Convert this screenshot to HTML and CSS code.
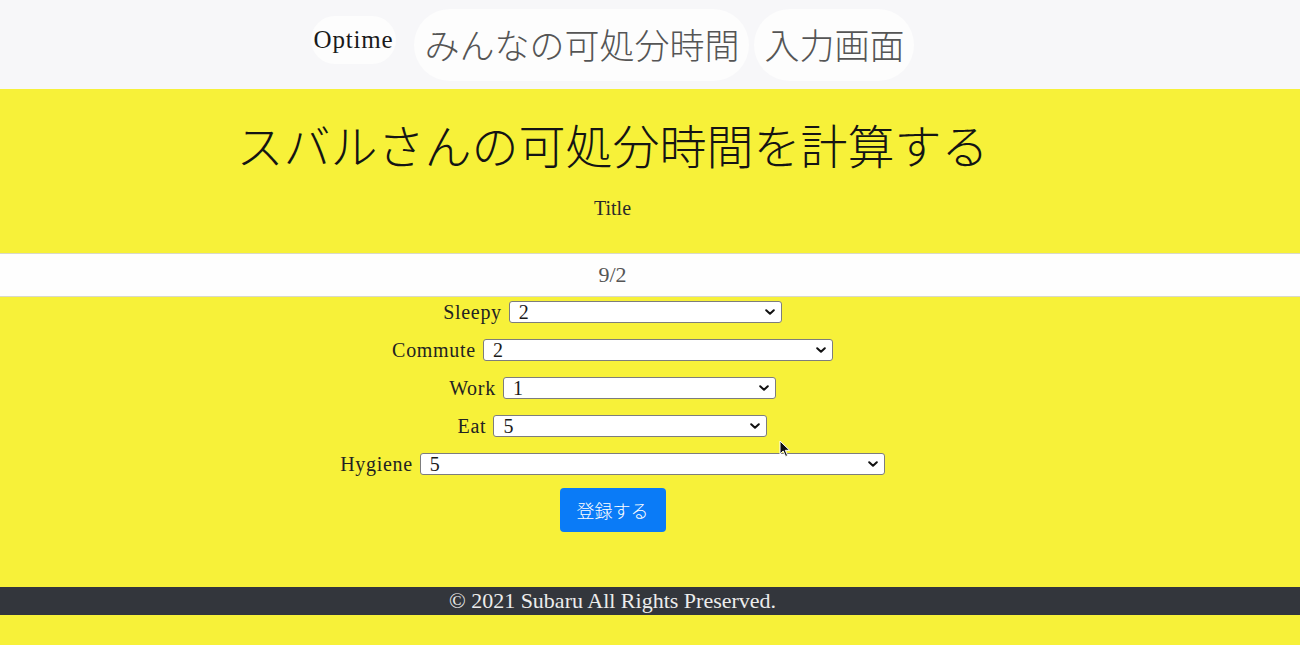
FILE: index.html
```html
<!DOCTYPE html>
<html lang="ja">
<head>
<meta charset="utf-8">
<title>Optime</title>
<link rel="stylesheet" href="styles.css">
</head>
<body>
<nav class="topnav">
  <a class="pill pill-brand" href="#">Optime</a>
  <a class="pill pill-link pill-gap" href="#">みんなの可処分時間</a>
  <a class="pill pill-link" href="#">入力画面</a>
</nav>

<header class="hero">
  <h1 class="hero-title">スバルさんの可処分時間を計算する</h1>
  <p class="hero-sub">Title</p>
</header>

<div class="date-band">9/2</div>

<form class="time-form">
  <div class="row">
    <label class="row-label" for="sleepy">Sleepy</label>
    <span class="select-wrap w-273">
      <select id="sleepy" class="select"><option>2</option></select>
      <svg class="chev" viewBox="0 0 10 6" width="10" height="6"><path d="M1.2 1.2 L5 4.8 L8.8 1.2" fill="none" stroke="#111" stroke-width="2" stroke-linecap="round" stroke-linejoin="round"/></svg>
    </span>
  </div>
  <div class="row">
    <label class="row-label" for="commute">Commute</label>
    <span class="select-wrap w-350">
      <select id="commute" class="select"><option>2</option></select>
      <svg class="chev" viewBox="0 0 10 6" width="10" height="6"><path d="M1.2 1.2 L5 4.8 L8.8 1.2" fill="none" stroke="#111" stroke-width="2" stroke-linecap="round" stroke-linejoin="round"/></svg>
    </span>
  </div>
  <div class="row">
    <label class="row-label" for="work">Work</label>
    <span class="select-wrap w-273">
      <select id="work" class="select"><option>1</option></select>
      <svg class="chev" viewBox="0 0 10 6" width="10" height="6"><path d="M1.2 1.2 L5 4.8 L8.8 1.2" fill="none" stroke="#111" stroke-width="2" stroke-linecap="round" stroke-linejoin="round"/></svg>
    </span>
  </div>
  <div class="row">
    <label class="row-label" for="eat">Eat</label>
    <span class="select-wrap w-274">
      <select id="eat" class="select"><option>5</option></select>
      <svg class="chev" viewBox="0 0 10 6" width="10" height="6"><path d="M1.2 1.2 L5 4.8 L8.8 1.2" fill="none" stroke="#111" stroke-width="2" stroke-linecap="round" stroke-linejoin="round"/></svg>
    </span>
  </div>
  <div class="row">
    <label class="row-label" for="hygiene">Hygiene</label>
    <span class="select-wrap w-465">
      <select id="hygiene" class="select"><option>5</option></select>
      <svg class="chev" viewBox="0 0 10 6" width="10" height="6"><path d="M1.2 1.2 L5 4.8 L8.8 1.2" fill="none" stroke="#111" stroke-width="2" stroke-linecap="round" stroke-linejoin="round"/></svg>
    </span>
  </div>
  <div class="submit-row">
    <button type="button" class="btn-primary">登録する</button>
  </div>
  <svg class="cursor" viewBox="0 0 12 18" width="12" height="18"><path d="M1 1 L1 14 L4.2 11 L6.6 16.5 L8.6 15.6 L6.3 10.3 L10.6 10.3 Z" fill="#111" stroke="#fff" stroke-width="1"/></svg>
</form>

<footer class="site-footer">© 2021 Subaru All Rights Preserved.</footer>
</body>
</html>
```

FILE: styles.css
```css
* { box-sizing: border-box; }

html, body {
  margin: 0;
  padding: 0;
}

body {
  background: #f7f139;
  font-family: "Liberation Serif", "Noto Sans CJK JP", serif;
  color: #222;
}

/* ---------- nav ---------- */
.topnav {
  height: 89px;
  background: #f7f7f9;
  display: flex;
  align-items: center;
  justify-content: center;
  padding-right: 75px;
}

.pill {
  display: flex;
  align-items: center;
  justify-content: center;
  background: #fdfdfd;
  border-radius: 36px;
  text-decoration: none;
}

.pill-brand {
  align-self: flex-start;
  height: 48px;
  margin-top: 16px;
  padding: 0 3px;
  margin-right: 18px;
  font-size: 25px;
  letter-spacing: 0.8px;
  color: #1a1a1a;
  border-radius: 24px;
}

.pill-link {
  height: 72px;
  padding: 0 10px 2px;
  font-family: "Noto Sans CJK JP", sans-serif;
  font-weight: 300;
  font-size: 35px;
  color: #555;
}

.pill-gap { margin-right: 5px; }

/* ---------- hero ---------- */
.hero {
  height: 164px;
  padding: 27px 75px 0 0;
  text-align: center;
}

.hero-title {
  margin: 0;
  font-family: "Noto Sans CJK JP", sans-serif;
  font-weight: 300;
  font-size: 47px;
  line-height: 56px;
  color: #141414;
}

.hero-sub {
  margin: 24px 0 0;
  font-size: 20px;
  line-height: 24px;
  color: #2a2a2a;
}

/* ---------- date band ---------- */
.date-band {
  height: 44px;
  background: #fefefe;
  border-top: 1px solid #d9d9c8;
  border-bottom: 1px solid #d9d9c8;
  display: flex;
  align-items: center;
  justify-content: center;
  padding-right: 75px;
  font-size: 22px;
  color: #555;
}

/* ---------- form ---------- */
.time-form {
  position: relative;
  height: 290px;
  padding: 4px 75px 0 0;
  display: flex;
  flex-direction: column;
  align-items: center;
}

.row {
  display: flex;
  align-items: center;
  gap: 7px;
  height: 22px;
  margin-bottom: 16px;
}

.row-label {
  font-size: 20px;
  letter-spacing: 0.7px;
  color: #222;
}

.select-wrap {
  position: relative;
  display: block;
  height: 22px;
}

.w-273 { width: 273px; }
.w-274 { width: 274px; }
.w-350 { width: 350px; }
.w-465 { width: 465px; }

.select {
  -webkit-appearance: none;
  appearance: none;
  width: 100%;
  height: 22px;
  margin: 0;
  padding: 0 0 0 9px;
  background: #fff;
  border: 1px solid #7d7d7d;
  border-radius: 3px;
  font-family: "Liberation Serif", serif;
  font-size: 20px;
  line-height: 20px;
  color: #1a1a1a;
}

.chev {
  position: absolute;
  right: 7px;
  top: 8px;
  pointer-events: none;
}

.submit-row {
  margin-top: -3px;
}

.btn-primary {
  width: 106px;
  height: 44px;
  background: #0a7bf7;
  color: #fff;
  border: none;
  border-radius: 4px;
  font-family: "Noto Sans CJK JP", sans-serif;
  font-weight: 300;
  font-size: 18px;
}

.cursor {
  position: absolute;
  left: 779px;
  top: 143px;
}

/* ---------- footer ---------- */
.site-footer {
  height: 28px;
  background: #33363c;
  color: #ececec;
  display: flex;
  align-items: center;
  justify-content: center;
  padding-right: 75px;
  font-size: 22px;
}
```
